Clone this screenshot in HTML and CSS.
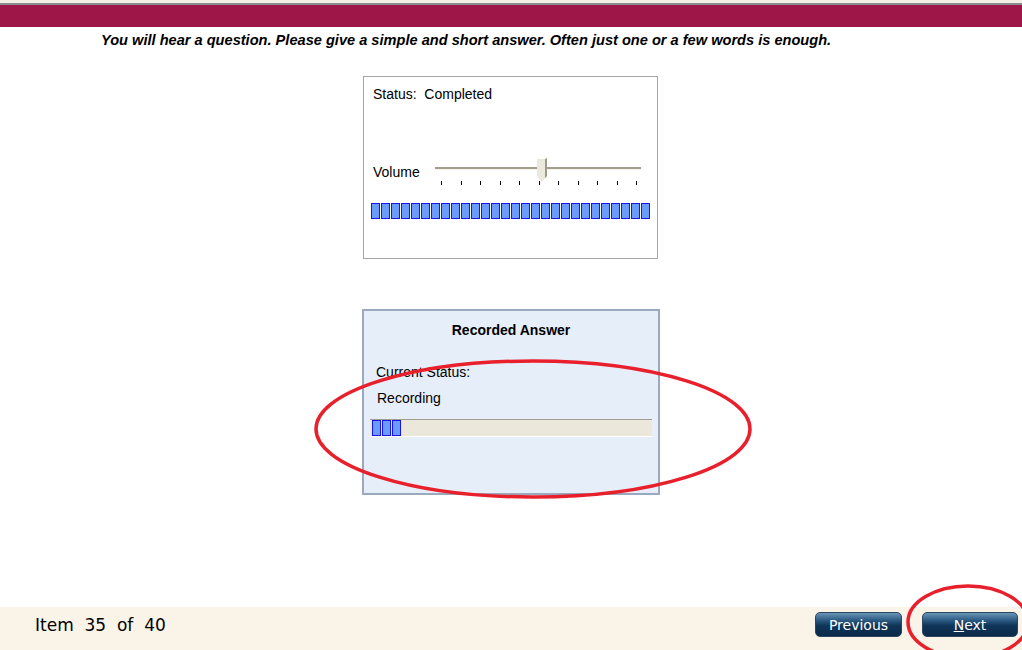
FILE: index.html
```html
<!DOCTYPE html>
<html lang="en">
<head>
    <meta charset="UTF-8">
    <title>Item 35 of 40</title>
    <link rel="stylesheet" href="styles.css">
</head>
<body>
    <div class="page">
        <div class="top-line"></div>
        <div class="banner"></div>

        <div class="main">
            <p class="instruction">You will hear a question. Please give a simple and short answer. Often just one or a few words is enough.</p>

            <div class="player">
                <div class="player-status">Status:&nbsp; Completed</div>
                <div class="volume-row">
                    <span class="volume-label">Volume</span>
                    <div class="slider">
                        <div class="track"></div>
                        <div class="thumb"></div>
                        <div class="ticks">
                            <span></span><span></span><span></span><span></span><span></span><span></span>
                            <span></span><span></span><span></span><span></span><span></span>
                        </div>
                    </div>
                </div>
                <div class="blocks" id="playBlocks"></div>
            </div>

            <div class="recorder">
                <div class="recorder-title">Recorded Answer</div>
                <div class="recorder-label">Current Status:</div>
                <div class="recorder-state">Recording</div>
                <div class="rec-bar">
                    <div class="blocks" id="recBlocks"></div>
                </div>
            </div>
        </div>

        <div class="footer">
            <span class="item-count">Item&nbsp; 35&nbsp; of&nbsp; 40</span>
            <div class="nav">
                <button class="nav-btn prev">Previous</button>
                <button class="nav-btn next"><u>N</u>ext</button>
            </div>
        </div>

        <!-- hand-drawn marks on the screenshot -->
        <svg class="marks" width="1022" height="650" viewBox="0 0 1022 650">
            <ellipse cx="533" cy="429" rx="217" ry="68" />
            <ellipse cx="968" cy="622" rx="60" ry="36" />
        </svg>
    </div>

    <script>
        function fillBlocks(id, count) {
            const box = document.getElementById(id);
            for (let i = 0; i < count; i++) {
                const b = document.createElement('span');
                box.appendChild(b);
            }
        }
        fillBlocks('playBlocks', 28);
        fillBlocks('recBlocks', 3);
    </script>
</body>
</html>
```

FILE: styles.css
```css
* {
    margin: 0;
    padding: 0;
    box-sizing: border-box;
}

body {
    background-color: white;
    font-family: 'Liberation Sans', Arial, sans-serif;
    color: #000;
}

.page {
    position: relative;
    width: 1022px;
    height: 650px;
    display: flex;
    flex-direction: column;
    overflow: hidden;
}

.top-line {
    height: 5px;
    background: linear-gradient(#f3efe4 0, #f3efe4 3px, #8c8c8c 3px, #8c8c8c 5px);
}

.banner {
    height: 22px;
    background-color: #9e1548;
}

.main {
    flex: 1;
    display: flex;
    flex-direction: column;
    align-items: center;
}

.instruction {
    align-self: flex-start;
    margin: 5px 0 0 101px;
    font-size: 14.6px;
    font-weight: bold;
    font-style: italic;
    line-height: 17px;
}

/* audio player box */
.player {
    margin-top: 27px;
    margin-left: -1px;
    width: 295px;
    height: 183px;
    border: 1px solid #a5a5a5;
    background-color: white;
    padding: 9px 7px 0 9px;
    font-size: 14px;
}

.player-status {
    line-height: 17px;
}

.volume-row {
    display: flex;
    align-items: flex-start;
    margin-top: 56px;
    height: 44px;
}

.volume-label {
    width: 62px;
    line-height: 17px;
    margin-top: 5px;
}

.slider {
    position: relative;
    width: 206px;
    height: 30px;
}

.track {
    position: absolute;
    left: 0;
    right: 0;
    top: 8px;
    height: 3px;
    background: linear-gradient(#a39e8e 0, #a39e8e 2px, #f4f2ea 2px);
}

.thumb {
    position: absolute;
    left: 102px;
    top: -1px;
    width: 10px;
    height: 24px;
    background: #ebe8dc;
    border-right: 2px solid #9f9b8c;
    border-top: 1px solid #fff;
    clip-path: polygon(0 0, 100% 0, 100% 75%, 50% 100%, 0 75%);
}

.ticks {
    position: absolute;
    left: 6px;
    right: 4px;
    top: 22px;
    display: flex;
    justify-content: space-between;
}

.ticks span {
    width: 1px;
    height: 4px;
    background: #000;
}

.blocks {
    display: flex;
    gap: 1px;
}

.blocks span {
    width: 9px;
    height: 16px;
    background-color: #6b9cfb;
    border: 1px solid #1515f0;
}

.player .blocks {
    margin-left: -2px;
}

/* recorder box */
.recorder {
    margin-top: 50px;
    width: 298px;
    height: 186px;
    border: 2px solid #9aa9be;
    background-color: #e6eef9;
    padding: 0 6px;
    font-size: 14px;
}

.recorder-title {
    text-align: center;
    font-weight: bold;
    margin-top: 11px;
    line-height: 17px;
}

.recorder-label {
    margin: 25px 0 0 6px;
    line-height: 17px;
}

.recorder-state {
    margin: 9px 0 0 7px;
    line-height: 17px;
}

.rec-bar {
    margin-top: 12px;
    height: 18px;
    background-color: #ebe7da;
    border-top: 1px solid #a09c8f;
    border-bottom: 1px solid #fff;
    padding-left: 2px;
}

/* bottom bar */
.footer {
    height: 43px;
    background-color: #faf3e8;
    display: flex;
    align-items: flex-start;
    justify-content: space-between;
    padding: 5px 4px 0 35px;
}

.item-count {
    font-family: 'DejaVu Sans', Verdana, sans-serif;
    font-size: 17px;
    line-height: 24px;
    margin-top: 1px;
}

.nav {
    display: flex;
    gap: 20px;
}

.nav-btn {
    height: 25px;
    border: 1px solid #2a4660;
    border-radius: 5px;
    background: linear-gradient(#6b95b8 0, #2f5d85 30%, #0f3558 55%, #0a2a4a 100%);
    color: white;
    font-family: 'DejaVu Sans', Verdana, sans-serif;
    font-size: 14px;
}

.nav-btn.prev {
    width: 87px;
}

.nav-btn.next {
    width: 96px;
}

.marks {
    position: absolute;
    left: 0;
    top: 0;
    pointer-events: none;
}

.marks ellipse {
    fill: none;
    stroke: #e8202c;
    stroke-width: 3.5;
}
```
